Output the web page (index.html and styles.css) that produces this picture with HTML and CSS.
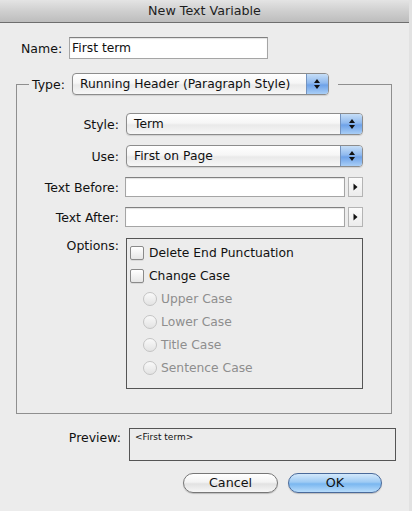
FILE: index.html
```html
<!DOCTYPE html>
<html>
<head>
<meta charset="utf-8">
<link rel="stylesheet" href="styles.css">
</head>
<body>
<div class="window">
  <div class="titlebar">New Text Variable</div>
  <div class="name-row">
    <span class="lbl name-lbl">Name:</span>
    <div class="textfield name-field">First term</div>
  </div>
  <fieldset class="group">
    <legend class="legend">
      <span class="lbl">Type:</span>
      <div class="popup type-popup">
        <span class="popup-text">Running Header (Paragraph Style)</span>
        <span class="stepper"><svg width="8" height="12" viewBox="0 0 8 12"><path d="M4 1 L7 5 L1 5 Z M4 11 L7 7 L1 7 Z" fill="#111"/></svg></span>
      </div>
    </legend>
    <div class="form-grid">
      <span class="lbl">Style:</span>
      <div class="popup">
        <span class="popup-text">Term</span>
        <span class="stepper"><svg width="8" height="12" viewBox="0 0 8 12"><path d="M4 1 L7 5 L1 5 Z M4 11 L7 7 L1 7 Z" fill="#111"/></svg></span>
      </div>
      <span class="lbl">Use:</span>
      <div class="popup">
        <span class="popup-text">First on Page</span>
        <span class="stepper"><svg width="8" height="12" viewBox="0 0 8 12"><path d="M4 1 L7 5 L1 5 Z M4 11 L7 7 L1 7 Z" fill="#111"/></svg></span>
      </div>
      <span class="lbl">Text Before:</span>
      <div class="field-btn">
        <div class="textfield wide"></div>
        <div class="arrow-btn"><svg width="5" height="8" viewBox="0 0 5 8"><path d="M0.5 0.5 L4.5 4 L0.5 7.5 Z" fill="#111"/></svg></div>
      </div>
      <span class="lbl">Text After:</span>
      <div class="field-btn">
        <div class="textfield wide"></div>
        <div class="arrow-btn"><svg width="5" height="8" viewBox="0 0 5 8"><path d="M0.5 0.5 L4.5 4 L0.5 7.5 Z" fill="#111"/></svg></div>
      </div>
      <span class="lbl lbl-top">Options:</span>
      <div class="options">
        <div class="opt"><span class="checkbox"></span><span>Delete End Punctuation</span></div>
        <div class="opt"><span class="checkbox"></span><span>Change Case</span></div>
        <div class="opt sub disabled"><span class="radio"></span><span>Upper Case</span></div>
        <div class="opt sub disabled"><span class="radio"></span><span>Lower Case</span></div>
        <div class="opt sub disabled"><span class="radio"></span><span>Title Case</span></div>
        <div class="opt sub disabled"><span class="radio"></span><span>Sentence Case</span></div>
      </div>
    </div>
  </fieldset>
  <div class="preview-row">
    <span class="lbl preview-lbl">Preview:</span>
    <div class="preview-box">&lt;First term&gt;</div>
  </div>
  <div class="buttons">
    <button class="btn">Cancel</button>
    <button class="btn btn-default">OK</button>
  </div>
</div>
</body>
</html>
```

FILE: styles.css
```css
* { box-sizing: border-box; }
html, body { margin: 0; padding: 0; }
body {
  width: 412px;
  height: 511px;
  overflow: hidden;
  background: #ececec;
  font-family: "Lucida Grande", "DejaVu Sans", sans-serif;
  font-size: 12.3px;
  color: #111;
}
.window {
  width: 412px;
  height: 511px;
  background: #ececec;
  border-right: 3px solid #e2e2e2;
}
.titlebar {
  height: 23px;
  background: linear-gradient(#e4e4e4, #cfcfcf 50%, #bdbdbd);
  border-bottom: 1px solid #6e6e6e;
  text-align: center;
  line-height: 22px;
  font-size: 12.7px;
  color: #1e1e1e;
}
.lbl { white-space: nowrap; font-size: 12.5px; }
.name-row {
  display: flex;
  align-items: center;
  gap: 7px;
  padding-left: 21px;
  margin-top: 14px;
}
.textfield {
  background: #fff;
  border: 1px solid #a5a5a5;
  border-top-color: #808080;
  box-shadow: inset 0 1px 1px rgba(0,0,0,0.12);
  height: 22px;
  line-height: 20px;
  padding-left: 2px;
}
.name-field { width: 199px; }
.group {
  margin: 14px 17px 0 16px;
  padding: 18px 31px 24px 0;
  border: 1px solid #8f8f8f;
  min-width: 0;
}
.legend {
  margin-left: 12px;
  padding: 0 9px 0 3px;
  display: flex;
  align-items: center;
  gap: 7px;
}
.popup {
  display: flex;
  height: 22px;
  border: 1px solid #8c8c8c;
  border-radius: 4px;
  background: linear-gradient(#ffffff, #f6f6f6 45%, #e9e9e9 55%, #f7f7f7);
  box-shadow: 0 1px 1px rgba(0,0,0,0.12);
  overflow: hidden;
}
.type-popup { width: 257px; }
.popup-text {
  flex: 1;
  padding-left: 7px;
  line-height: 20px;
  white-space: nowrap;
}
.stepper {
  width: 22px;
  display: flex;
  align-items: center;
  justify-content: center;
  background: linear-gradient(#c6def7, #8fb9ee 45%, #6ea2e8 55%, #a9cef6);
  border-left: 1px solid #7393bf;
}
.form-grid {
  display: grid;
  grid-template-columns: 102px 237px;
  column-gap: 7px;
  row-gap: 10px;
  align-items: center;
}
.form-grid > .lbl { text-align: right; }
.form-grid > .lbl-top { align-self: start; padding-top: 1px; }
.field-btn {
  display: flex;
  align-items: center;
  gap: 3px;
  margin-left: -1px;
}
.textfield.wide { width: 220px; height: 20px; }
.arrow-btn {
  width: 15px;
  height: 20px;
  border: 1px solid #b4b4b4;
  background: linear-gradient(#fbfbfb, #ececec);
  display: flex;
  align-items: center;
  justify-content: center;
}
.options {
  height: 151px;
  border: 1px solid #555;
  padding: 2px 0 0 3px;
  margin-top: 1px;
}
.opt {
  display: flex;
  align-items: center;
  height: 23px;
  gap: 5px;
}
.checkbox {
  width: 14px;
  height: 14px;
  border: 1px solid #8a8a8a;
  border-radius: 2px;
  background: linear-gradient(#ffffff, #e6e6e6);
  box-shadow: 0 1px 0 rgba(0,0,0,0.08);
}
.opt.sub { padding-left: 13px; gap: 4px; }
.radio {
  width: 14px;
  height: 14px;
  border: 1px solid #c4c4c4;
  border-radius: 50%;
  background: linear-gradient(#f9f9f9, #e3e3e3);
}
.disabled { color: #8e8e8e; }
.preview-row {
  display: flex;
  align-items: flex-start;
  margin-top: 14px;
  padding-left: 17px;
}
.preview-lbl {
  width: 104px;
  text-align: right;
  padding-top: 2px;
}
.preview-box {
  margin-left: 8px;
  width: 267px;
  height: 33px;
  border: 1px solid #555;
  font-size: 9px;
  padding: 3px 0 0 5px;
}
.buttons {
  display: flex;
  justify-content: flex-end;
  gap: 10px;
  padding-right: 27px;
  margin-top: 12px;
}
.btn {
  font-family: inherit;
  font-size: 12.7px;
  color: #111;
  width: 95px;
  height: 20px;
  padding: 0;
  border-radius: 10px;
  border: 1px solid #777;
  background: linear-gradient(#ffffff, #f3f3f3 45%, #e2e2e2 55%, #f6f6f6);
  box-shadow: 0 1px 1px rgba(0,0,0,0.2);
  line-height: 18px;
}
.btn-default {
  width: 94px;
  border-color: #4a6a9a;
  background: linear-gradient(#d3e8fb, #9ecbf4 45%, #7ab7f0 55%, #b8dcfb);
}
```
